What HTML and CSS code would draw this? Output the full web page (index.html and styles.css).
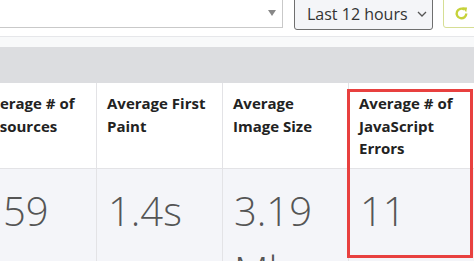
FILE: index.html
```html
<!DOCTYPE html>
<html lang="en">
<head>
    <meta charset="UTF-8">
    <title>Performance</title>
    <link rel="stylesheet" href="styles.css">
</head>
<body>

    <div class="toolbar">
        <div class="select-box">
            <span class="caret"></span>
        </div>
        <button class="range-btn">Last 12 hours
            <svg class="chev" width="10" height="6" viewBox="0 0 10 6">
                <path d="M1 1 L5 5 L9 1" fill="none" stroke="#555" stroke-width="1.3"/>
            </svg>
        </button>
        <button class="refresh-btn">
            <svg width="15" height="15" viewBox="0 0 14 14">
                <path d="M11.5 7 A4.5 4.5 0 1 1 9.6 3.3" fill="none" stroke="#c6d23a" stroke-width="2.2"/>
                <path d="M7.6 1.2 L12.2 1.4 L11.4 5.8 Z" fill="#c6d23a"/>
            </svg>
        </button>
    </div>

    <div class="spacer"></div>
    <div class="band"></div>

    <div class="stats">
        <div class="col">
            <div class="head">Average # of Resources</div>
            <div class="value first">59</div>
        </div>
        <div class="col">
            <div class="head">Average First Paint</div>
            <div class="value">1.4s</div>
        </div>
        <div class="col">
            <div class="head">Average Image Size</div>
            <div class="value">3.19 Mb</div>
        </div>
        <div class="col highlight">
            <div class="head">Average # of JavaScript Errors</div>
            <div class="value">11</div>
        </div>
    </div>

</body>
</html>
```

FILE: styles.css
```css
/* General */
html {
    overflow: hidden;
}

body {
    margin: 0;
    padding: 0;
    width: 474px;
    height: 261px;
    overflow: hidden;
    background: #fff;
    font-family: 'Open Sans', 'Noto Sans', sans-serif;
    color: #222;
}

/* Top bar */
.toolbar {
    display: flex;
    align-items: flex-start;
    gap: 10px;
    height: 42px;
    margin-top: -6px;
    border-bottom: 1px solid #e6e7ea;
    background: #fff;
}

.select-box {
    position: relative;
    flex: 1;
    margin-left: -10px;
    height: 33px;
    border: 1px solid #c9c9c9;
    border-top: none;
    background: #fff;
}

.caret {
    position: absolute;
    right: 6px;
    top: 16px;
    border-left: 4px solid transparent;
    border-right: 4px solid transparent;
    border-top: 6px solid #888;
}

.range-btn {
    display: flex;
    align-items: center;
    gap: 9px;
    margin-left: 1px;
    width: 139px;
    height: 36px;
    padding: 4px 0 0 12px;
    white-space: nowrap;
    font-family: 'Open Sans', 'Noto Sans', sans-serif;
    font-size: 16px;
    color: #333;
    background: #f4f5f8;
    border: 1px solid #6f6f6f;
    border-radius: 3px;
}

.chev {
    flex-shrink: 0;
}

.refresh-btn {
    width: 40px;
    height: 34px;
    margin-right: -9px;
    padding: 7px 0 0 10px;
    text-align: left;
    background: #fff;
    border: 1px solid #d6de94;
    border-radius: 3px;
}

.spacer {
    height: 10px;
    background: #f8f9fa;
}

.band {
    height: 36px;
    background: #dcdde0;
}

/* Stats table */
.stats {
    display: flex;
    margin-left: -29px;
}

.col {
    width: 125px;
    flex-shrink: 0;
    border-right: 1px solid #e3e3e6;
}

.head {
    height: 76px;
    padding: 9px 10px 0 10px;
    font-size: 15px;
    font-weight: 700;
    line-height: 22.5px;
    color: #222;
    border-bottom: 1px solid #e3e3e6;
}

.value {
    height: 80px;
    padding: 12px 10px 0 11px;
    font-size: 40px;
    font-weight: 300;
    line-height: 60px;
    color: #555;
    background: #f4f5f9;
}

.value.first {
    padding-left: 32px;
}

.highlight {
    position: relative;
}

.highlight::after {
    content: "";
    position: absolute;
    left: -2px;
    top: 6px;
    width: 120px;
    height: 163px;
    border: 3px solid #e8403f;
}
```
